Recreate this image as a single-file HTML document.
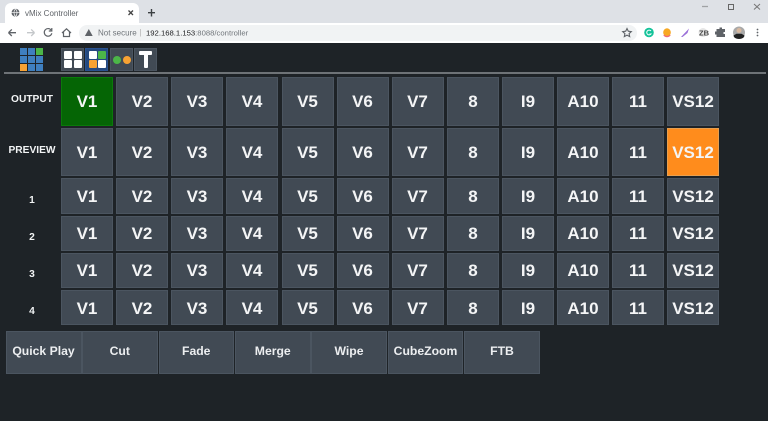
<!DOCTYPE html>
<html><head><meta charset="utf-8"><style>
html,body{margin:0;padding:0;width:768px;height:421px;overflow:hidden;background:#1e2327;font-family:"Liberation Sans",sans-serif}
div{position:absolute;box-sizing:border-box}
.b{width:52px;background:#414a54;border:1px solid #4b5560;color:#f4f5f6;font-weight:bold;font-size:17px;display:flex;align-items:center;justify-content:center;white-space:nowrap;padding-top:2px}
.r1{top:77px;height:48.5px}.r2{top:127.5px;height:48.5px}.r3{top:178px;height:35.5px}.r4{top:215.5px;height:35px}.r5{top:252.5px;height:35.5px}.r6{top:290px;height:35px}
.c1{left:61px}.c2{left:116px}.c3{left:171px}.c4{left:226px}.c5{left:281.5px}.c6{left:336.5px}.c7{left:391.5px}.c8{left:447px}.c9{left:502px}.c10{left:557px}.c11{left:612px}.c12{left:667px}
.q{height:43px;top:331px;background:#414a54;border:1px solid #4b5560;color:#eceef0;font-weight:bold;font-size:12.2px;display:flex;align-items:center;justify-content:center;padding-bottom:3px;white-space:nowrap}
.l{left:0;width:64px;color:#f2f4f5;font-weight:bold;font-size:10.2px;text-align:center;line-height:12px}
.t{width:23px;height:23px;top:48px;background:#414a54;border:1px solid #4b5560}
.s{position:absolute;width:8px;height:8px;border-radius:1px}
</style></head><body>
<div style="left:0;top:0;width:768px;height:23px;background:#dee1e6"></div>
<div style="left:0;top:23px;width:768px;height:20px;background:#fff"></div>
<div style="left:5px;top:3px;width:134px;height:20px;background:#fff;border-radius:6px 6px 0 0"></div>
<div style="left:79px;top:25px;width:558px;height:16px;background:#f1f3f4;border-radius:8px"></div>
<svg style="position:absolute;left:0;top:0" width="768" height="43" fill="none">
<circle cx="15.5" cy="12.7" r="4" fill="#5f6368"/>
<path d="M11.5 12.7h8M15.5 8.7c-2 2.500-2 5.500 0 8M15.500 8.700c2 2.500 2 5.500 0 8" stroke="#fff" stroke-width=".7"/>
<path d="M128.500 10.500l4.500 4.500M133 10.500l-4.500 4.500" stroke="#444" stroke-width="1.300"/>
<path d="M151.500 9v7.500M148 12.700h7" stroke="#3c4043" stroke-width="1.400"/>
<path d="M702 6.500h6" stroke="#a0a2a5" stroke-width="1.300"/>
<rect x="728.500" y="4.500" width="5" height="5" stroke="#666" stroke-width="1"/>
<path d="M754 4l6 5.500M760 4l-6 5.500" stroke="#777" stroke-width="1"/>
<path d="M8.500 32.700h7.500M8.500 32.700l3.300-3.300M8.500 32.700l3.300 3.300" stroke="#5f6368" stroke-width="1.300"/>
<path d="M27 32.700h7.500M34.500 32.700l-3.300-3.300M34.500 32.700l-3.300 3.300" stroke="#c4c7ca" stroke-width="1.300"/>
<path d="M51.200 30.200a3.800 3.800 0 1 0 .6 3M51.800 28v3h-3" stroke="#5f6368" stroke-width="1.200"/>
<path d="M62 33l4.500-4.200 4.500 4.200M63.500 32v4.500h6V32" stroke="#5f6368" stroke-width="1.200"/>
<path d="M88.800 29l3.900 7h-7.800z" fill="#5f6368"/>
<path d="M140.500 29v7.500" stroke="#bbb" stroke-width=".8"/>
<path d="M627 28.500l1.300 2.700 3 .4-2.200 2 .6 3-2.700-1.500-2.700 1.500.6-3-2.200-2 3-.4z" stroke="#5f6368" stroke-width="1.100"/>
<circle cx="649" cy="32.500" r="4.800" fill="#15c39a"/>
<path d="M651 31a2.400 2.400 0 1 0 0 3h-1.500" stroke="#fff" stroke-width="1"/>
<ellipse cx="667" cy="32.500" rx="3.800" ry="4.300" fill="#f7a823"/>
<path d="M663.800 35a4 4 0 0 0 6.400 0" stroke="#ef6a7a" stroke-width="1.200"/>
<path d="M681 37l8-8.500-1.500 4.500-5 4z" fill="#9a6fd8"/>
<circle cx="703" cy="32.500" r="4.500" fill="#e6e6e6"/>
<path d="M716.500 29h3v-1.500H722V29h3v3h-1.500v2h1.500v3h-8.500v-2.500H715v-3h1.500z" fill="#5f6368"/>
<circle cx="739" cy="32.500" r="6" fill="#a9a9a9"/>
<circle cx="739" cy="30.500" r="2.500" fill="#d8b9a0"/>
<path d="M733.500 35.500a5.500 3.500 0 0 0 11 0l-3-1.800h-5z" fill="#222"/>
<circle cx="757.500" cy="29.500" r=".9" fill="#5f6368"/><circle cx="757.500" cy="32.500" r=".9" fill="#5f6368"/><circle cx="757.500" cy="35.500" r=".9" fill="#5f6368"/>
<text x="25" y="15.800" font-size="8" fill="#5f6368" font-family="Liberation Sans">vMix Controller</text>
<text x="98" y="35.500" font-size="8" fill="#70757a" font-family="Liberation Sans">Not secure</text>
<text x="146" y="35.500" font-size="7.700" fill="#202124" font-family="Liberation Sans">192.168.1.153<tspan fill="#70757a">:8088/controller</tspan></text>
<text x="699" y="35.500" font-size="7.500" font-weight="bold" fill="#444" font-family="Liberation Sans">ZB</text>
</svg>
<div style="left:0;top:43px;width:768px;height:378px;background:#1e2327"></div>

<svg style="position:absolute;left:19.500px;top:48px" width="23" height="23">
<rect x="0" y="0" width="7" height="7" fill="#3f7fbf"/><rect x="8" y="0" width="7" height="7" fill="#3f7fbf"/><rect x="16" y="0" width="7" height="7" fill="#4cb648"/>
<rect x="0" y="8" width="7" height="7" fill="#3f7fbf"/><rect x="8" y="8" width="7" height="7" fill="#3f7fbf"/><rect x="16" y="8" width="7" height="7" fill="#3f7fbf"/>
<rect x="0" y="16" width="7" height="7" fill="#f7a233"/><rect x="8" y="16" width="7" height="7" fill="#3f7fbf"/><rect x="16" y="16" width="7" height="7" fill="#3f7fbf"/>
</svg>
<div class="t" style="left:60.500px"><i class="s" style="left:2.500px;top:1.700px;background:#fff"></i><i class="s" style="left:12px;top:1.700px;background:#fff"></i><i class="s" style="left:2.500px;top:11.200px;background:#fff"></i><i class="s" style="left:12px;top:11.200px;background:#fff"></i></div>
<div class="t" style="left:85px;background:#24497f;border-color:#2a5290"><i class="s" style="left:2.500px;top:1.700px;background:#fff"></i><i class="s" style="left:12px;top:1.700px;background:#4cb648"></i><i class="s" style="left:2.500px;top:11.200px;background:#f7a233"></i><i class="s" style="left:12px;top:11.200px;background:#fff"></i></div>
<div class="t" style="left:109.500px"><i class="s" style="left:2px;top:6.500px;border-radius:50%;background:#4cb648"></i><i class="s" style="left:12px;top:6.500px;border-radius:50%;background:#f7a233"></i></div>
<div class="t" style="left:134px"><i class="s" style="left:4px;top:2px;width:13px;height:3.500px;background:#fff"></i><i class="s" style="left:8.500px;top:2px;width:4px;height:17px;background:#fff"></i></div>
<div style="left:4px;top:72px;width:762px;height:2px;background:#6e7377"></div>

<div class="l" style="top:93.500px">OUTPUT</div>
<div class="l" style="top:144.500px">PREVIEW</div>
<div class="l" style="top:195px">1</div>
<div class="l" style="top:232px">2</div>
<div class="l" style="top:269px">3</div>
<div class="l" style="top:306px">4</div>

<div class="b r1 c1" style="background:#056505;border-color:#0a7a0a">V1</div><div class="b r1 c2">V2</div><div class="b r1 c3">V3</div><div class="b r1 c4">V4</div><div class="b r1 c5">V5</div><div class="b r1 c6">V6</div><div class="b r1 c7">V7</div><div class="b r1 c8">8</div><div class="b r1 c9">I9</div><div class="b r1 c10">A10</div><div class="b r1 c11">11</div><div class="b r1 c12">VS12</div>
<div class="b r2 c1">V1</div><div class="b r2 c2">V2</div><div class="b r2 c3">V3</div><div class="b r2 c4">V4</div><div class="b r2 c5">V5</div><div class="b r2 c6">V6</div><div class="b r2 c7">V7</div><div class="b r2 c8">8</div><div class="b r2 c9">I9</div><div class="b r2 c10">A10</div><div class="b r2 c11">11</div><div class="b r2 c12" style="background:#ff8c1c;border-color:#e8a050">VS12</div>
<div class="b r3 c1">V1</div><div class="b r3 c2">V2</div><div class="b r3 c3">V3</div><div class="b r3 c4">V4</div><div class="b r3 c5">V5</div><div class="b r3 c6">V6</div><div class="b r3 c7">V7</div><div class="b r3 c8">8</div><div class="b r3 c9">I9</div><div class="b r3 c10">A10</div><div class="b r3 c11">11</div><div class="b r3 c12">VS12</div>
<div class="b r4 c1">V1</div><div class="b r4 c2">V2</div><div class="b r4 c3">V3</div><div class="b r4 c4">V4</div><div class="b r4 c5">V5</div><div class="b r4 c6">V6</div><div class="b r4 c7">V7</div><div class="b r4 c8">8</div><div class="b r4 c9">I9</div><div class="b r4 c10">A10</div><div class="b r4 c11">11</div><div class="b r4 c12">VS12</div>
<div class="b r5 c1">V1</div><div class="b r5 c2">V2</div><div class="b r5 c3">V3</div><div class="b r5 c4">V4</div><div class="b r5 c5">V5</div><div class="b r5 c6">V6</div><div class="b r5 c7">V7</div><div class="b r5 c8">8</div><div class="b r5 c9">I9</div><div class="b r5 c10">A10</div><div class="b r5 c11">11</div><div class="b r5 c12">VS12</div>
<div class="b r6 c1">V1</div><div class="b r6 c2">V2</div><div class="b r6 c3">V3</div><div class="b r6 c4">V4</div><div class="b r6 c5">V5</div><div class="b r6 c6">V6</div><div class="b r6 c7">V7</div><div class="b r6 c8">8</div><div class="b r6 c9">I9</div><div class="b r6 c10">A10</div><div class="b r6 c11">11</div><div class="b r6 c12">VS12</div>

<div class="q" style="left:5.500px;width:76px">Quick Play</div>
<div class="q" style="left:82px;width:75.500px">Cut</div>
<div class="q" style="left:158.500px;width:75.500px">Fade</div>
<div class="q" style="left:235px;width:75.500px">Merge</div>
<div class="q" style="left:311px;width:76px">Wipe</div>
<div class="q" style="left:388px;width:75px">CubeZoom</div>
<div class="q" style="left:464px;width:76px">FTB</div>
</body></html>
